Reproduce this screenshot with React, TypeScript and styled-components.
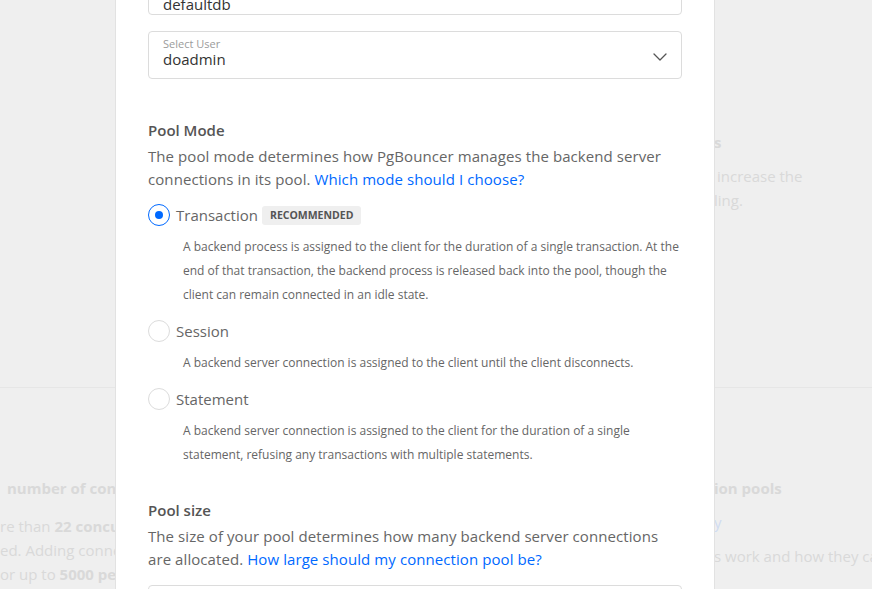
import { createGlobalStyle, styled } from 'styled-components';

const GlobalStyle = createGlobalStyle`
  html, body {
    margin: 0;
    padding: 0;
    background: #efefef;
  }
  body {
    font-family: 'Open Sans', 'Liberation Sans', Arial, sans-serif;
    -webkit-font-smoothing: antialiased;
  }
`;

const modes = [
  {
    name: 'Transaction',
    checked: true,
    badge: 'Recommended',
    text: 'A backend process is assigned to the client for the duration of a single transaction. At the end of that transaction, the backend process is released back into the pool, though the client can remain connected in an idle state.',
  },
  {
    name: 'Session',
    checked: false,
    text: 'A backend server connection is assigned to the client until the client disconnects.',
  },
  {
    name: 'Statement',
    checked: false,
    text: 'A backend server connection is assigned to the client for the duration of a single statement, refusing any transactions with multiple statements.',
  },
];

export default function App() {
  return (
    <>
      <GlobalStyle />
      <S.Screen>
        <S.Page>
          <S.Section $height={387}>
            <S.LeftCol />
            <S.RightCol $top={130}>
              <S.BgHeading>s</S.BgHeading>
              <S.BgText $indent={3}>increase the</S.BgText>
              <S.BgText>ling.</S.BgText>
            </S.RightCol>
          </S.Section>
          <S.Section $height={210}>
            <S.LeftCol $top={88}>
              <S.BgHeading $indent={7}>number of connections</S.BgHeading>
              <S.BgSpacer />
              <S.BgText>
                re than <b>22 concurrent</b> connections
              </S.BgText>
              <S.BgText>ed. Adding connection pools</S.BgText>
              <S.BgText>
                or up to <b>5000 per</b> pool
              </S.BgText>
            </S.LeftCol>
            <S.RightCol $top={88}>
              <S.BgHeading>ion pools</S.BgHeading>
              <S.BgLink>y</S.BgLink>
              <S.BgText $gap={10}>s work and how they can help</S.BgText>
            </S.RightCol>
          </S.Section>
        </S.Page>

        <S.Modal>
          <S.Field>
            <S.FieldLabel>Database</S.FieldLabel>
            <S.FieldValue>defaultdb</S.FieldValue>
          </S.Field>
          <S.Field $select>
            <div>
              <S.FieldLabel>Select User</S.FieldLabel>
              <S.FieldValue>doadmin</S.FieldValue>
            </div>
            <svg width="14" height="14" viewBox="0 0 14 14" fill="none">
              <path d="M1 4l6 6 6-6" stroke="#555" strokeWidth="1.3" strokeLinecap="round" strokeLinejoin="round" />
            </svg>
          </S.Field>

          <S.Heading $top={23}>Pool Mode</S.Heading>
          <S.Text>
            The pool mode determines how PgBouncer manages the backend server connections in its pool.{' '}
            <S.Link href="#">Which mode should I choose?</S.Link>
          </S.Text>

          <S.Options>
            {modes.map((m) => (
              <S.Option key={m.name}>
                <S.RadioRow>
                  <S.Radio $checked={m.checked} />
                  <S.RadioLabel>{m.name}</S.RadioLabel>
                  {m.badge && <S.Badge>{m.badge}</S.Badge>}
                </S.RadioRow>
                <S.Description>{m.text}</S.Description>
              </S.Option>
            ))}
          </S.Options>

          <S.Heading $top={31}>Pool size</S.Heading>
          <S.Text>
            The size of your pool determines how many backend server connections are allocated.{' '}
            <S.Link href="#">How large should my connection pool be?</S.Link>
          </S.Text>
          <S.Field $top={14} />
        </S.Modal>
      </S.Screen>
    </>
  );
}

const S = {
  Screen: styled.div`
    position: relative;
    width: 100%;
    height: 589px;
    overflow: hidden;
    background: #efefef;
  `,
  Page: styled.div`
    display: flex;
    flex-direction: column;
  `,
  Section: styled.div<{ $height: number }>`
    display: grid;
    grid-template-columns: 116px 598px 1fr;
    height: ${(p) => p.$height}px;
    border-bottom: 1px solid #e6e6e6;
    &:last-child {
      border-bottom: none;
    }
  `,
  LeftCol: styled.div<{ $top?: number }>`
    grid-column: 1;
    padding-top: ${(p) => p.$top ?? 0}px;
    overflow: hidden;
    white-space: nowrap;
  `,
  RightCol: styled.div<{ $top?: number }>`
    grid-column: 3;
    padding-top: ${(p) => p.$top ?? 0}px;
    overflow: hidden;
    white-space: nowrap;
  `,
  BgHeading: styled.div<{ $indent?: number }>`
    padding-left: ${(p) => p.$indent ?? 0}px;
    font-size: 15px;
    font-weight: 700;
    line-height: 24px;
    color: #d9d9d9;
    margin-bottom: 10px;
  `,
  BgSpacer: styled.div`
    height: 4px;
  `,
  BgText: styled.div<{ $indent?: number; $gap?: number }>`
    padding-left: ${(p) => p.$indent ?? 0}px;
    margin-top: ${(p) => p.$gap ?? 0}px;
    font-size: 15px;
    line-height: 24px;
    color: #d9d9d9;
    b {
      font-weight: 700;
    }
  `,
  BgLink: styled.div`
    font-size: 15px;
    line-height: 24px;
    color: #cfdcf2;
  `,
  Modal: styled.div`
    position: absolute;
    top: -33px;
    left: 115px;
    width: 600px;
    box-sizing: border-box;
    padding: 0 32px 40px;
    background: #fff;
    border-left: 1px solid #e2e2e2;
    border-right: 1px solid #e2e2e2;
    display: flex;
    flex-direction: column;
  `,
  Field: styled.div<{ $select?: boolean; $top?: number }>`
    box-sizing: border-box;
    height: 48px;
    margin-top: ${(p) => p.$top ?? 0}px;
    margin-bottom: 16px;
    padding: 5px 14px 0;
    border: 1px solid #dcdcdc;
    border-radius: 4px;
    display: flex;
    justify-content: space-between;
    align-items: ${(p) => (p.$select ? 'flex-start' : 'stretch')};
    flex-direction: ${(p) => (p.$select ? 'row' : 'column')};
    svg {
      margin-top: 13px;
    }
    &:last-child {
      margin-bottom: 0;
    }
  `,
  FieldLabel: styled.div`
    font-size: 11px;
    line-height: 13px;
    color: #9b9b9b;
  `,
  FieldValue: styled.div`
    font-size: 15px;
    line-height: 19px;
    color: #333;
  `,
  Heading: styled.h3<{ $top: number }>`
    margin: ${(p) => p.$top}px 0 3px;
    font-size: 15px;
    font-weight: 600;
    line-height: 24px;
    color: #555;
  `,
  Text: styled.p`
    margin: 0;
    font-size: 15px;
    line-height: 23px;
    letter-spacing: 0.08px;
    color: #666;
  `,
  Link: styled.a`
    color: #0069ff;
    text-decoration: none;
  `,
  Options: styled.div`
    display: flex;
    flex-direction: column;
    gap: 12px;
    margin-top: 12px;
  `,
  Option: styled.div`
    display: flex;
    flex-direction: column;
    gap: 8px;
  `,
  RadioRow: styled.div`
    display: flex;
    align-items: center;
    height: 24px;
  `,
  Radio: styled.span<{ $checked: boolean }>`
    box-sizing: border-box;
    width: 22px;
    height: 22px;
    border-radius: 50%;
    border: 1px solid ${(p) => (p.$checked ? '#0069ff' : '#dcdcdc')};
    display: flex;
    align-items: center;
    justify-content: center;
    &::after {
      content: '';
      width: 8px;
      height: 8px;
      border-radius: 50%;
      background: ${(p) => (p.$checked ? '#0069ff' : 'transparent')};
    }
  `,
  RadioLabel: styled.span`
    margin-left: 6px;
    font-size: 15px;
    color: #666;
  `,
  Badge: styled.span`
    margin-left: 4px;
    padding: 0 8px;
    height: 19px;
    display: inline-flex;
    align-items: center;
    border-radius: 3px;
    background: #efefef;
    font-size: 10.5px;
    font-weight: 700;
    color: #555;
    text-transform: uppercase;
  `,
  Description: styled.p`
    margin: 0;
    padding-left: 35px;
    font-size: 12px;
    line-height: 24px;
    color: #666;
  `,
};
